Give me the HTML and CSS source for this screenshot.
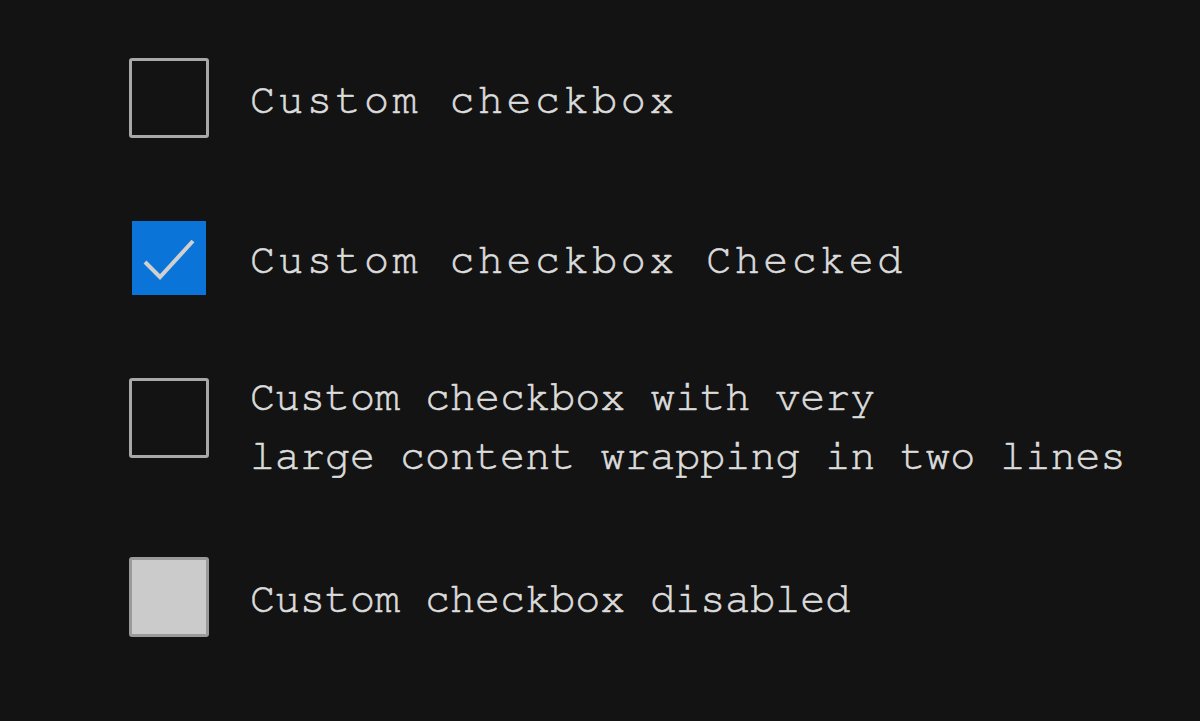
FILE: index.html
```html
<!DOCTYPE html>
<html lang="en">
  <head>
    <meta charset="UTF-8" />
    <meta name="viewport" content="width=device-width, initial-scale=1.0" />
    <title>Custom checkboxes</title>
    <link rel="stylesheet" href="styles.css">
  </head>
  <body>
    <div class="list">
      <label class="check check-wide">
        <input type="checkbox" />
        <span class="box"></span>
        <span class="text">Custom checkbox</span>
      </label>

      <label class="check check-wide">
        <input type="checkbox" checked />
        <span class="box">
          <svg viewBox="0 0 74 74" width="74" height="74">
            <polyline points="13,41 28,56 61,20" />
          </svg>
        </span>
        <span class="text">Custom checkbox Checked</span>
      </label>

      <!-- long label, wraps onto a second line -->
      <label class="check check-multi">
        <input type="checkbox" />
        <span class="box"></span>
        <span class="text">Custom checkbox with very<br />large content wrapping in two lines</span>
      </label>

      <label class="check">
        <input type="checkbox" disabled />
        <span class="box"></span>
        <span class="text">Custom checkbox disabled</span>
      </label>
    </div>
  </body>
</html>
```

FILE: styles.css
```css
body {
  margin: 0;
  background-color: #131313;
  font-family: "Nimbus Mono PS", "Nimbus Mono L", FreeMono, "Courier New", "Liberation Mono", monospace;
  color: #dcdcdc;
}

.list {
  display: flex;
  flex-direction: column;
  gap: 80px;
  padding: 58px 0 0 129px;
}

.check {
  display: flex;
  align-items: center;
  gap: 41px;
  font-size: 41.7px;
  line-height: 59px;
  cursor: pointer;
}

.check input {
  display: none;
}

.box {
  flex: none;
  box-sizing: border-box;
  width: 80px;
  height: 80px;
  border: 3px solid #a8a8a8;
  border-radius: 3px;
}

.text {
  padding-top: 5px;
  -webkit-text-stroke: 0.6px currentColor;
}

.check-wide .text {
  letter-spacing: 3.5px;
}

.check input:checked + .box {
  width: 74px;
  height: 74px;
  margin: 3px;
  border: none;
  border-radius: 0;
  background-color: #0b74d8;
}

.box svg {
  display: block;
}

.box polyline {
  fill: none;
  stroke: #d0d0d0;
  stroke-width: 4;
}

.check-multi {
  align-items: flex-start;
}

.check-multi .text {
  padding-top: 0;
  margin: -10px 0 -9px;
}

.check input:disabled + .box {
  background-color: #cbcbcb;
  border-color: #9a9a9a;
  cursor: not-allowed;
}
```
